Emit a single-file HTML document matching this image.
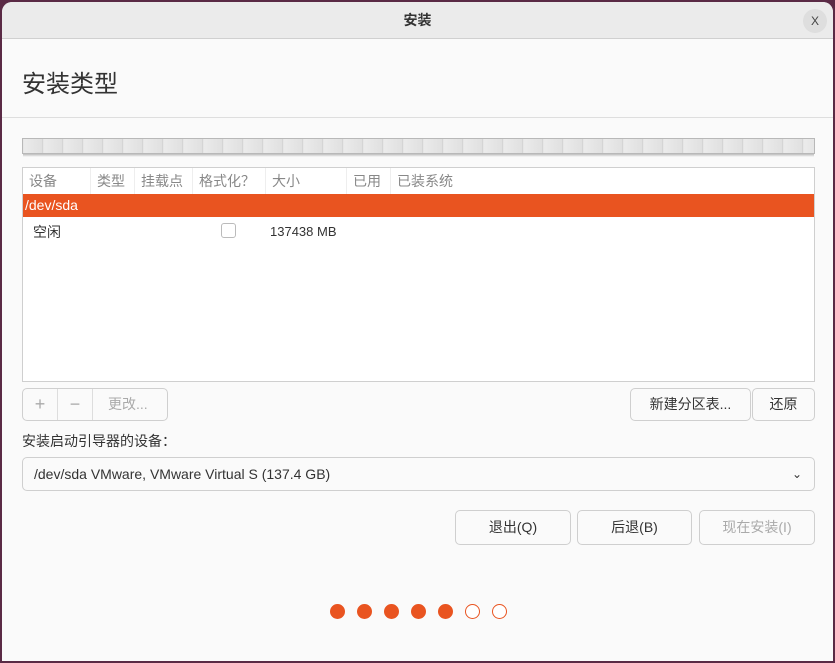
<!DOCTYPE html>
<html><head><meta charset="utf-8"><style>
*{box-sizing:border-box;margin:0;padding:0}
body{width:835px;height:663px;background:#5a2a45;font-family:"Liberation Sans","Noto Sans CJK SC",sans-serif;position:relative;overflow:hidden}
.win{position:absolute;left:2px;top:2px;width:831px;height:659px;background:#fafafa;border-radius:10px 10px 0 0;overflow:hidden}
.title{position:absolute;left:0;top:0;width:100%;height:37px;background:#ebebeb;border-bottom:1px solid #d0d0d0;text-align:center;line-height:37px;font-size:14px;font-weight:bold;color:#333}
.close{position:absolute;right:6px;top:7px;width:24px;height:24px;border-radius:50%;background:#dedede;font-size:12px;line-height:24px;text-align:center;color:#444;font-weight:normal}
.abs{position:absolute}
.h1{left:20px;top:62px;font-size:24px;color:#333}
.hr{left:0;top:115px;width:100%;height:1px;background:#dedede}
.bar{left:20px;top:136px;width:793px;height:16px;border:1px solid #b8b8b8;background:repeating-linear-gradient(90deg,#e2e2e2 0,#ebebeb 1px,#e0e0e0 19px,#cacaca 20px);}
.bar:after{content:"";position:absolute;left:0;right:0;bottom:-4px;height:3px;background:linear-gradient(#bbb,#fafafa)}
.table{left:20px;top:165px;width:793px;height:215px;border:1px solid #cfcfcf;background:#fff}
.th{position:absolute;top:0;height:26px;line-height:26px;font-size:14px;color:#888;border-right:1px solid #eee;padding-left:6px}
.sel{position:absolute;left:0;top:26px;width:100%;height:23px;background:#e95420;color:#fff;font-size:14px;line-height:23px;padding-left:2px}
.btn{position:absolute;border:1px solid #cfcfcf;border-radius:5px;background:#fafafa;font-size:14px;color:#333;text-align:center}
.dot{position:absolute;top:602px;width:15px;height:15px;border-radius:50%;background:#e95420}
.dot.o{background:#fff;border:1.5px solid #e95420}
</style></head><body>
<div class="win">
<div class="title">安装<div class="close">X</div></div>
<div class="abs h1">安装类型</div>
<div class="abs hr"></div>
<div class="abs bar"></div>
<div class="abs table">
<div class="th" style="left:0;width:68px">设备</div>
<div class="th" style="left:68px;width:44px">类型</div>
<div class="th" style="left:112px;width:58px">挂载点</div>
<div class="th" style="left:170px;width:73px">格式化？</div>
<div class="th" style="left:243px;width:81px">大小</div>
<div class="th" style="left:324px;width:44px">已用</div>
<div class="th" style="left:368px;width:100px;border:none">已装系统</div>
<div class="sel">/dev/sda</div>
<div class="abs" style="left:10px;top:54px;font-size:14px;color:#333">空闲</div>
<div class="abs" style="left:198px;top:55px;width:15px;height:15px;border:1px solid #bbb;border-radius:3px;background:#fff"></div>
<div class="abs" style="left:247px;top:56px;font-size:13px;color:#333">137438 MB</div>
</div>
<div class="btn" style="left:20px;top:386px;width:146px;height:33px;color:#aaa;line-height:31px;text-align:left">
<span style="position:absolute;left:0;width:35px;text-align:center;border-right:1px solid #ddd;font-size:18px">+</span>
<span style="position:absolute;left:35px;width:35px;text-align:center;border-right:1px solid #ddd;font-size:18px">−</span>
<span style="position:absolute;left:85px">更改...</span></div>
<div class="btn" style="left:628px;top:386px;width:121px;height:33px;line-height:31px">新建分区表...</div>
<div class="btn" style="left:750px;top:386px;width:63px;height:33px;line-height:31px">还原</div>
<div class="abs" style="left:20px;top:429px;font-size:14px;color:#333">安装启动引导器的设备：</div>
<div class="btn" style="left:20px;top:455px;width:793px;height:34px;line-height:32px;text-align:left;padding-left:11px">/dev/sda VMware, VMware Virtual S (137.4 GB)<span style="position:absolute;right:12px;top:0;font-size:12px">&#8964;</span></div>
<div class="btn" style="left:453px;top:508px;width:116px;height:35px;line-height:33px">退出(Q)</div>
<div class="btn" style="left:575px;top:508px;width:115px;height:35px;line-height:33px">后退(B)</div>
<div class="btn" style="left:697px;top:508px;width:116px;height:35px;line-height:33px;color:#aaa">现在安装(I)</div>
<div class="dot" style="left:328px"></div>
<div class="dot" style="left:355px"></div>
<div class="dot" style="left:382px"></div>
<div class="dot" style="left:409px"></div>
<div class="dot" style="left:436px"></div>
<div class="dot o" style="left:463px"></div>
<div class="dot o" style="left:490px"></div>
</div>
</body></html>
